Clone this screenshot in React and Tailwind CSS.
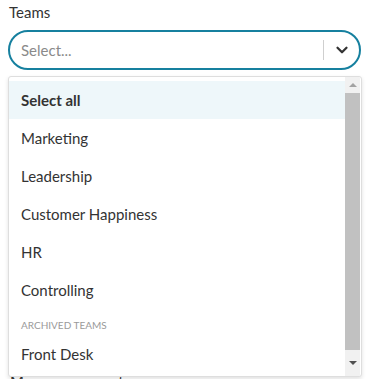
import { ChevronDown } from 'lucide-react'

const teams = ['Marketing', 'Leadership', 'Customer Happiness', 'HR', 'Controlling']

export default function App() {
  return (
    <div className="relative min-h-[379px] bg-white px-[8px] pt-[3px] text-[15px] text-[#333] font-['Lato',sans-serif]">
      {/* Teams field */}
      <label className="block leading-[18px] mb-[9px] pl-[1px]">Teams</label>
      <div className="flex items-center h-[40px] border-2 border-[#16809f] rounded-full bg-white">
        <span className="flex-1 pl-[11px] text-[#8a8a8a]">Select...</span>
        <span className="w-px h-[20px] bg-[#cfcfcf]" />
        <span className="w-[35px] flex justify-center">
          <ChevronDown size={18} strokeWidth={3} className="text-[#333]" />
        </span>
      </div>

      {/* next field, hidden under the menu */}
      <div className="mt-[302px] pl-[2px] leading-[18px] text-[#333]">Manager accounts</div>

      {/* Dropdown menu */}
      <div className="absolute left-[8px] top-[76px] w-[354px] h-[301px] flex bg-white border border-[#dedede] rounded-[3px] shadow-[0_2px_4px_rgba(0,0,0,0.12)] overflow-hidden">
        <div className="flex-1 pt-[4px]">
          <div className="h-[38px] flex items-center pl-[12px] bg-[#eef7fa] font-bold">Select all</div>
          {teams.map((t) => (
            <div key={t} className="h-[38px] flex items-center pl-[12px]">{t}</div>
          ))}
          <div className="h-[26px] flex items-end pb-[4px] pl-[12px] text-[10px] leading-[12px] uppercase text-[#9a9a9a]">Archived teams</div>
          <div className="h-[38px] flex items-center pl-[12px]">Front Desk</div>
        </div>
        {/* scrollbar */}
        <div className="w-[15px] mr-[1px] flex flex-col bg-[#f1f1f1]">
          <div className="h-[16px] flex items-center justify-center">
            <span className="w-0 h-0 border-x-[4px] border-x-transparent border-b-[4px] border-b-[#a3a3a3]" />
          </div>
          <div className="h-[257px] bg-[#c1c1c1]" />
          <div className="flex-1 flex items-center justify-center">
            <span className="w-0 h-0 border-x-[4px] border-x-transparent border-t-[4px] border-t-[#505050]" />
          </div>
        </div>
      </div>
    </div>
  )
}
